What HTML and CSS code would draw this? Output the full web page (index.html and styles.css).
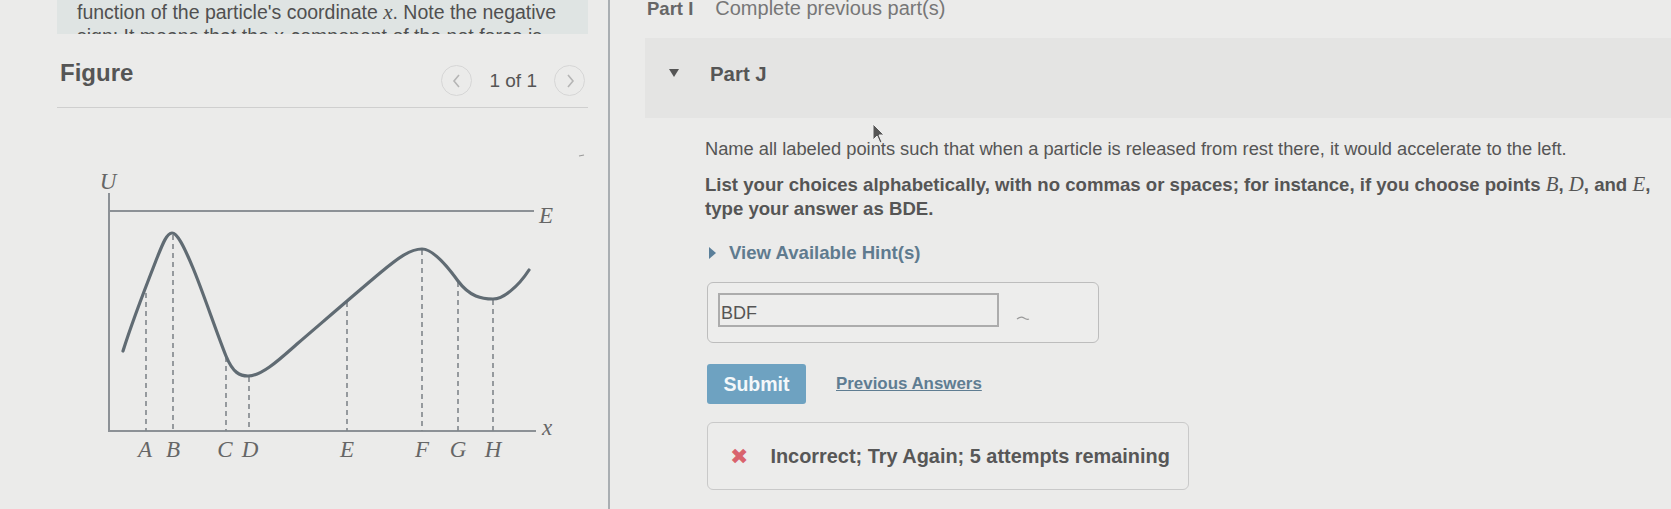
FILE: index.html
```html
<!DOCTYPE html>
<html>
<head>
<meta charset="utf-8">
<link rel="stylesheet" href="styles.css">
</head>
<body>
<div class="page">
  <section class="left">
    <div class="intro">
      <p>function of the particle's coordinate <i class="math">x</i>. Note the negative<br>sign: It means that the x-component of the net force is</p>
    </div>
    <div class="fig-head">
      <h2 class="fig-title">Figure</h2>
      <div class="nav">
        <span class="circle"><svg width="12" height="14" viewBox="0 0 12 14"><polyline points="8,1 3,7 8,13" fill="none" stroke="#b5b5b5" stroke-width="1.6"/></svg></span>
        <span class="count">1 of 1</span>
        <span class="circle"><svg width="12" height="14" viewBox="0 0 12 14"><polyline points="4,1 9,7 4,13" fill="none" stroke="#b5b5b5" stroke-width="1.6"/></svg></span>
      </div>
    </div>
    <svg class="graph" width="531" height="398" viewBox="57 109 531 398">
      <line x1="579" y1="155" x2="584" y2="154" stroke="#999" stroke-width="1.2"/>
      <g stroke="#8c9196" stroke-width="2" fill="none">
        <line x1="109" y1="192" x2="109" y2="431"/>
        <line x1="108" y1="430" x2="536" y2="430"/>
        <line x1="109" y1="210" x2="534" y2="210"/>
      </g>
      <g stroke="#80868b" stroke-width="1.6" stroke-dasharray="5 4" fill="none">
        <line x1="146" y1="292" x2="146" y2="430"/>
        <line x1="173" y1="234" x2="173" y2="430"/>
        <line x1="226" y1="356" x2="226" y2="430"/>
        <line x1="249" y1="376" x2="249" y2="430"/>
        <line x1="347" y1="301" x2="347" y2="430"/>
        <line x1="422" y1="249" x2="422" y2="430"/>
        <line x1="458" y1="281" x2="458" y2="430"/>
        <line x1="493" y1="299" x2="493" y2="430"/>
      </g>
      <path d="M123,350 C133,318 148,280 157,257 C163,242 167,232 172,232 C177,232 183,243 193,267 C203,291 216,330 226,355 C233,372 240,375 248,375 C262,375 280,358 297,343 C325,319 355,293 380,272 C398,257 410,248 422,248 C432,248 445,262 458,280 C470,296 482,298 493,298 C503,298 518,286 529,269" fill="none" stroke="#606b73" stroke-width="3.2" stroke-linecap="round"/>
      <g class="glabel">
        <text x="108" y="188" text-anchor="middle">U</text>
        <text x="546" y="222" text-anchor="middle">E</text>
        <text x="547" y="434" text-anchor="middle">x</text>
        <text x="145" y="456" text-anchor="middle">A</text>
        <text x="173" y="456" text-anchor="middle">B</text>
        <text x="225" y="456" text-anchor="middle">C</text>
        <text x="250" y="456" text-anchor="middle">D</text>
        <text x="347" y="456" text-anchor="middle">E</text>
        <text x="422" y="456" text-anchor="middle">F</text>
        <text x="458" y="456" text-anchor="middle">G</text>
        <text x="493" y="456" text-anchor="middle">H</text>
      </g>
    </svg>
  </section>
  <section class="right">
    <div class="part-prev"><b>Part I</b><span>Complete previous part(s)</span></div>
    <div class="part-bar">
      <span class="tri-down"></span>
      <span class="part-name">Part J</span>
    </div>
    <div class="content">
      <p class="q">Name all labeled points such that when a particle is released from rest there, it would accelerate to the left.</p>
      <p class="q2">List your choices alphabetically, with no commas or spaces; for instance, if you choose points <i class="math">B</i>, <i class="math">D</i>, and <i class="math">E</i>,<br>type your answer as BDE.</p>
      <div class="hint"><span class="tri-right"></span>View Available Hint(s)</div>
      <div class="answer-box">
        <div class="input">BDF</div>
        <svg class="squiggle" width="14" height="6" viewBox="0 0 14 6"><path d="M1,4 Q5,1 8,3 T13,4" fill="none" stroke="#999" stroke-width="1.2"/></svg>
      </div>
      <div class="actions">
        <button class="submit">Submit</button>
        <a class="prev-answers">Previous Answers</a>
      </div>
      <div class="feedback">
        <span class="xmark">&#10006;</span>
        <span class="fb-text">Incorrect; Try Again; 5 attempts remaining</span>
      </div>
    </div>
  </section>
</div>
<svg class="cursor" width="14" height="22" viewBox="0 0 14 22"><path d="M1,1 L1,17 L5,13 L8,20 L10,19 L7,12 L12,12 Z" fill="#555" stroke="#eee" stroke-width="1"/></svg>
</body>
</html>
```
FILE: styles.css
```css
html, body {
  margin: 0;
  padding: 0;
  width: 1671px;
  height: 509px;
  overflow: hidden;
  background: #ebebea;
  font-family: "Liberation Sans", Arial, sans-serif;
  color: #555;
}
.page {
  display: flex;
  height: 509px;
}
.left {
  width: 610px;
  flex: none;
  border-right: 2px solid #a9aeb2;
  box-sizing: border-box;
  display: flex;
  flex-direction: column;
}
.intro {
  margin-left: 57px;
  width: 531px;
  height: 34px;
  overflow: hidden;
  background: #dfe4e3;
  box-sizing: border-box;
  padding-left: 20px;
}
.intro p {
  margin: 0;
  font-size: 19.5px;
  line-height: 24px;
  color: #505050;
}
.math {
  font-family: "Liberation Serif", "Times New Roman", serif;
  font-style: italic;
  font-size: 1.08em;
}
.fig-head {
  margin-left: 57px;
  width: 531px;
  height: 74px;
  border-bottom: 1px solid #cfcfcf;
  display: flex;
  align-items: flex-start;
  box-sizing: border-box;
  flex: none;
}
.fig-title {
  margin: 26px 0 0 3px;
  font-size: 24px;
  line-height: 26px;
  font-weight: bold;
  color: #555;
}
.nav {
  margin: 31px 3px 0 auto;
  display: flex;
  align-items: center;
  gap: 17px;
}
.circle {
  width: 29px;
  height: 29px;
  border: 1.5px solid #d6d6d6;
  border-radius: 50%;
  display: flex;
  align-items: center;
  justify-content: center;
}
.count {
  font-size: 19px;
  color: #555;
}
.graph {
  display: block;
  margin: 2px 0 0 57px;
  flex: none;
}
.glabel text {
  font-family: "Liberation Serif", "Times New Roman", serif;
  font-style: italic;
  font-size: 23px;
  fill: #666;
}
.right {
  flex: 1;
  padding-left: 35px;
  display: flex;
  flex-direction: column;
}
.part-prev {
  margin-top: -3px;
  font-size: 20px;
  line-height: 22px;
  color: #666;
  white-space: nowrap;
  display: flex;
  align-items: baseline;
}
.part-prev b {
  color: #666;
  font-size: 18.5px;
  margin-left: 2px;
}
.part-prev span {
  color: #777;
  margin-left: 22px;
}
.part-bar {
  margin-top: 18px;
  height: 80px;
  background: #e4e4e3;
  display: flex;
  align-items: flex-start;
  padding: 25px 0 0 24px;
  box-sizing: border-box;
  flex: none;
}
.tri-down {
  width: 0;
  height: 0;
  border-left: 5.5px solid transparent;
  border-right: 5.5px solid transparent;
  border-top: 8px solid #555;
  margin-top: 6px;
}
.part-name {
  margin-left: 31px;
  font-size: 20.4px;
  line-height: 22px;
  font-weight: bold;
  color: #555;
}
.content {
  padding-left: 60px;
  display: flex;
  flex-direction: column;
  align-items: flex-start;
}
.q {
  margin: 20px 0 0;
  font-size: 18.3px;
  line-height: 22px;
  color: #555;
  white-space: nowrap;
}
.q2 {
  margin: 12px 0 0;
  font-size: 18.6px;
  line-height: 24px;
  font-weight: bold;
  color: #555;
  white-space: nowrap;
}
.q2 .math {
  font-weight: normal;
  font-size: 1.12em;
}
.hint {
  margin-top: 21px;
  display: flex;
  align-items: center;
  font-size: 18.6px;
  line-height: 22px;
  font-weight: bold;
  color: #5f7b8f;
}
.tri-right {
  width: 0;
  height: 0;
  border-top: 6px solid transparent;
  border-bottom: 6px solid transparent;
  border-left: 7px solid #5a7f9a;
  margin: 0 13px 0 4px;
}
.answer-box {
  margin-top: 18px;
  margin-left: 2px;
  width: 392px;
  height: 61px;
  box-sizing: border-box;
  border: 1.5px solid #bdbdbd;
  border-radius: 6px;
  background: #ededec;
  padding: 10px 0 0 10px;
  display: flex;
  align-items: flex-start;
}
.input {
  width: 281px;
  height: 34px;
  box-sizing: border-box;
  border: 2px solid #acacac;
  font-size: 18px;
  line-height: 36px;
  padding-left: 1px;
  color: #555;
}
.squiggle {
  margin: 22px 0 0 17px;
}
.actions {
  margin-top: 21px;
  margin-left: 2px;
  display: flex;
  align-items: center;
}
.submit {
  width: 99px;
  height: 40px;
  border: none;
  border-radius: 3px;
  background: #6ea2c1;
  color: #f4f8fa;
  font-family: "Liberation Sans", Arial, sans-serif;
  font-size: 19.5px;
  font-weight: bold;
  padding: 0;
}
.prev-answers {
  margin-left: 30px;
  font-size: 16.9px;
  font-weight: bold;
  color: #5f7d92;
  text-decoration: underline;
}
.feedback {
  margin-top: 18px;
  margin-left: 2px;
  width: 482px;
  height: 68px;
  box-sizing: border-box;
  border: 1.5px solid #c9c9c9;
  border-radius: 6px;
  background: #ececeb;
  display: flex;
  align-items: center;
  padding-left: 22px;
}
.xmark {
  color: #d9636d;
  font-size: 22px;
  font-family: "DejaVu Sans", sans-serif;
}
.fb-text {
  margin-left: 22px;
  font-size: 19.9px;
  font-weight: bold;
  color: #575757;
}
.cursor {
  position: absolute;
  left: 872px;
  top: 123px;
}
```
